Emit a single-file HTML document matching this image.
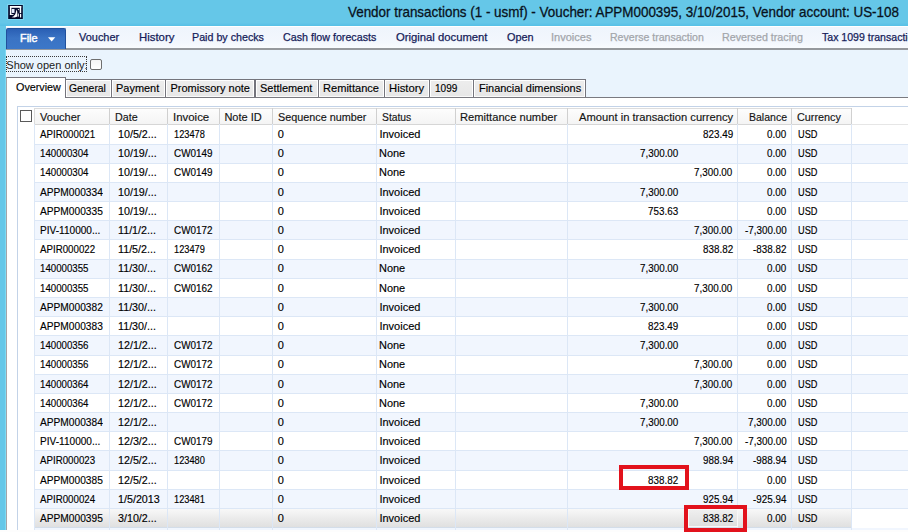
<!DOCTYPE html><html><head><meta charset="utf-8"><style>
*{margin:0;padding:0;box-sizing:border-box}
html,body{width:908px;height:532px;overflow:hidden}
body{position:relative;background:#65c7e8;font-family:"Liberation Sans",sans-serif;font-size:11px;color:#1b1b1b}
.a{position:absolute}
.t{position:absolute;white-space:nowrap;line-height:20px;height:20px}
</style></head><body>
<svg class="a" style="left:7.2px;top:4.05px" width="17" height="16" viewBox="-1 -1 16.6 16">
<rect x="-1" y="-1" width="16.6" height="16" fill="#7fd6ef"/>
<rect x="0" y="0" width="14.6" height="14" fill="#03072a"/>
<g fill="#fff">
<rect x="1.7" y="1" width="11.3" height="1.8"/>
<rect x="1.7" y="1" width="1.5" height="8.8"/>
<rect x="11.5" y="1" width="1.5" height="7"/>
<rect x="11.8" y="8.85" width="1.2" height="3.6"/>
<rect x="3.6" y="3.95" width="2.7" height="4" fill="#e8eeff"/>
<rect x="1.7" y="9.1" width="3.6" height="0.9"/>
<path d="M3.3 12.25L5.5 11.2L7.2 9L8.4 4.6L9 6.5L9.3 11.5L6.5 12.6Z"/>
<circle cx="10.2" cy="4.55" r="0.65"/>
<rect x="9.9" y="8.55" width="0.8" height="3.1"/>
</g>
</svg>
<div class="t" style="left:348.11px;top:2.40px;font-size:15px;color:#08121c;transform:scaleX(0.8941);transform-origin:0 0;-webkit-text-stroke:0.15px currentColor;-webkit-text-stroke:0.3px currentColor;">Vendor transactions (1 - usmf) - Voucher: APPM000395, 3/10/2015, Vendor account: US-108</div>
<div class="a" style="left:0;top:22.5px;width:908px;height:3.5px;background:linear-gradient(#63c6e8,#57c0e6)"></div>
<div class="a" style="left:6px;top:26px;width:902px;height:23px;background:linear-gradient(#eff5fc,#f3f7fd 70%,#fafcfe);border-top:1px solid #ffffff"></div>
<div class="a" style="left:6px;top:48.4px;width:902px;height:1.6px;background:#95989c"></div>
<div class="a" style="left:6px;top:27.6px;width:60px;height:21px;background:linear-gradient(#2a5fb4,#3a73c4 45%,#3c77c8);border:1px solid #21509c;border-bottom:none;border-radius:2px 2px 0 0"></div>
<div class="t" style="left:19.71px;top:27.60px;font-size:11px;color:#ffffff;transform:scaleX(0.9908);transform-origin:0 0;-webkit-text-stroke:0.15px currentColor;-webkit-text-stroke:0.45px #fff;">File</div>
<svg class="a" style="left:48px;top:36.7px" width="8" height="5"><path d="M0 0.2h7.3L3.65 4.4z" fill="#fff"/></svg>
<div class="t" style="left:79.35px;top:26.80px;font-size:11px;color:#161d5a;transform:scaleX(0.9963);transform-origin:0 0;-webkit-text-stroke:0.15px currentColor;-webkit-text-stroke:0.25px currentColor;">Voucher</div>
<div class="t" style="left:138.57px;top:26.80px;font-size:11px;color:#161d5a;transform:scaleX(1.0330);transform-origin:0 0;-webkit-text-stroke:0.15px currentColor;-webkit-text-stroke:0.25px currentColor;">History</div>
<div class="t" style="left:192.42px;top:26.80px;font-size:11px;color:#161d5a;transform:scaleX(0.9725);transform-origin:0 0;-webkit-text-stroke:0.15px currentColor;-webkit-text-stroke:0.25px currentColor;">Paid by checks</div>
<div class="t" style="left:282.97px;top:26.80px;font-size:11px;color:#161d5a;transform:scaleX(0.9721);transform-origin:0 0;-webkit-text-stroke:0.15px currentColor;-webkit-text-stroke:0.25px currentColor;">Cash flow forecasts</div>
<div class="t" style="left:395.79px;top:26.80px;font-size:11px;color:#161d5a;transform:scaleX(1.0248);transform-origin:0 0;-webkit-text-stroke:0.15px currentColor;-webkit-text-stroke:0.25px currentColor;">Original document</div>
<div class="t" style="left:506.81px;top:26.80px;font-size:11px;color:#161d5a;transform:scaleX(0.9883);transform-origin:0 0;-webkit-text-stroke:0.15px currentColor;-webkit-text-stroke:0.25px currentColor;">Open</div>
<div class="t" style="left:551.40px;top:26.80px;font-size:11px;color:#a3a6ab;transform:scaleX(1.0039);transform-origin:0 0;-webkit-text-stroke:0.15px currentColor;-webkit-text-stroke:0.25px currentColor;">Invoices</div>
<div class="t" style="left:610.34px;top:26.80px;font-size:11px;color:#a3a6ab;transform:scaleX(0.9595);transform-origin:0 0;-webkit-text-stroke:0.15px currentColor;-webkit-text-stroke:0.25px currentColor;">Reverse transaction</div>
<div class="t" style="left:722.22px;top:26.80px;font-size:11px;color:#a3a6ab;transform:scaleX(0.9736);transform-origin:0 0;-webkit-text-stroke:0.15px currentColor;-webkit-text-stroke:0.25px currentColor;">Reversed tracing</div>
<div class="t" style="left:821.96px;top:26.80px;font-size:11px;color:#161d5a;transform:scaleX(0.9600);transform-origin:0 0;-webkit-text-stroke:0.15px currentColor;-webkit-text-stroke:0.25px currentColor;">Tax 1099 transactions</div>
<div class="a" style="left:6px;top:50px;width:902px;height:482px;background:#eaf4fd"></div>
<div class="a" style="left:6.3px;top:56.3px;width:81.2px;height:16px;border:1px dotted #3a3a3a"></div>
<div class="t" style="left:6.30px;top:54.60px;font-size:11px;color:#1a1a1a;-webkit-text-stroke:0.15px currentColor;-webkit-text-stroke:0;">Show open only:</div>
<div class="a" style="left:90.4px;top:58.5px;width:11.9px;height:11.9px;border:1.2px solid #6e6e6e;border-radius:2px;background:linear-gradient(#f4f4f4,#fff)"></div>
<div class="a" style="left:6px;top:96.5px;width:902px;height:440px;background:#fff;border-left:1px solid #a4a4a8;border-top:1px solid #7a7a80"></div>
<div class="a" style="left:65.1px;top:78.5px;width:46.7px;height:18.5px;background:linear-gradient(#ededed,#e7e7e7);border:1px solid #74747c;border-bottom:none;box-shadow:inset 1px 1px 0 #fff,inset -1px 0 0 #fff,inset 0 -1px 0 #fafafa"></div>
<div class="t" style="left:69.48px;top:77.60px;font-size:11px;color:#000000;transform:scaleX(0.9432);transform-origin:0 0;-webkit-text-stroke:0.15px currentColor;">General</div>
<div class="a" style="left:110.8px;top:78.5px;width:55.10000000000001px;height:18.5px;background:linear-gradient(#ededed,#e7e7e7);border:1px solid #74747c;border-bottom:none;box-shadow:inset 1px 1px 0 #fff,inset -1px 0 0 #fff,inset 0 -1px 0 #fafafa"></div>
<div class="t" style="left:116.30px;top:77.60px;font-size:11px;color:#000000;transform:scaleX(0.9965);transform-origin:0 0;-webkit-text-stroke:0.15px currentColor;">Payment</div>
<div class="a" style="left:164.9px;top:78.5px;width:90.6px;height:18.5px;background:linear-gradient(#ededed,#e7e7e7);border:1px solid #74747c;border-bottom:none;box-shadow:inset 1px 1px 0 #fff,inset -1px 0 0 #fff,inset 0 -1px 0 #fafafa"></div>
<div class="t" style="left:170.50px;top:77.60px;font-size:11px;color:#000000;-webkit-text-stroke:0.15px currentColor;">Promissory note</div>
<div class="a" style="left:254.5px;top:78.5px;width:64.19999999999999px;height:18.5px;background:linear-gradient(#ededed,#e7e7e7);border:1px solid #74747c;border-bottom:none;box-shadow:inset 1px 1px 0 #fff,inset -1px 0 0 #fff,inset 0 -1px 0 #fafafa"></div>
<div class="t" style="left:260.00px;top:77.60px;font-size:11px;color:#000000;transform:scaleX(0.9952);transform-origin:0 0;-webkit-text-stroke:0.15px currentColor;">Settlement</div>
<div class="a" style="left:317.7px;top:78.5px;width:67.30000000000001px;height:18.5px;background:linear-gradient(#ededed,#e7e7e7);border:1px solid #74747c;border-bottom:none;box-shadow:inset 1px 1px 0 #fff,inset -1px 0 0 #fff,inset 0 -1px 0 #fafafa"></div>
<div class="t" style="left:323.09px;top:77.60px;font-size:11px;color:#000000;transform:scaleX(1.0065);transform-origin:0 0;-webkit-text-stroke:0.15px currentColor;">Remittance</div>
<div class="a" style="left:384.0px;top:78.5px;width:46.30000000000001px;height:18.5px;background:linear-gradient(#ededed,#e7e7e7);border:1px solid #74747c;border-bottom:none;box-shadow:inset 1px 1px 0 #fff,inset -1px 0 0 #fff,inset 0 -1px 0 #fafafa"></div>
<div class="t" style="left:388.88px;top:77.60px;font-size:11px;color:#000000;transform:scaleX(1.0270);transform-origin:0 0;-webkit-text-stroke:0.15px currentColor;">History</div>
<div class="a" style="left:429.3px;top:78.5px;width:44.80000000000001px;height:18.5px;background:linear-gradient(#ededed,#e7e7e7);border:1px solid #74747c;border-bottom:none;box-shadow:inset 1px 1px 0 #fff,inset -1px 0 0 #fff,inset 0 -1px 0 #fafafa"></div>
<div class="t" style="left:435.12px;top:77.60px;font-size:11px;color:#000000;transform:scaleX(0.9134);transform-origin:0 0;-webkit-text-stroke:0.15px currentColor;">1099</div>
<div class="a" style="left:473.1px;top:78.5px;width:113.0px;height:18.5px;background:linear-gradient(#ededed,#e7e7e7);border:1px solid #74747c;border-bottom:none;box-shadow:inset 1px 1px 0 #fff,inset -1px 0 0 #fff,inset 0 -1px 0 #fafafa"></div>
<div class="t" style="left:478.81px;top:77.60px;font-size:11px;color:#000000;transform:scaleX(0.9941);transform-origin:0 0;-webkit-text-stroke:0.15px currentColor;">Financial dimensions</div>
<div class="a" style="left:6px;top:77px;width:60.099999999999994px;height:21px;background:#fff;border:1px solid #74747c;border-left-color:#a4a4a8;border-bottom:none"></div>
<div class="t" style="left:15.71px;top:77.10px;font-size:11px;color:#000000;transform:scaleX(0.9791);transform-origin:0 0;-webkit-text-stroke:0.15px currentColor;">Overview</div>
<div class="a" style="left:17px;top:106px;width:900px;height:440px;border:1px solid #c3d3e8;background:#fff"></div>
<div class="a" style="left:34px;top:123.8px;width:874px;height:1px;background:#e6e6e6"></div>
<div class="a" style="left:34px;top:108.1px;width:817.5px;height:16.7px;background:linear-gradient(#fdfdfd,#f4f4f4);border-top:1px solid #dcdcdc;border-left:1px solid #dcdcdc;border-bottom:1px solid #d6d6d6"></div>
<div class="a" style="left:20px;top:110.4px;width:12px;height:12px;border:1px solid #5a5a5a;background:#fff"></div>
<div class="a" style="left:109.0px;top:108.1px;width:1px;height:16.7px;background:#d0d0d0"></div>
<div class="a" style="left:167.1px;top:108.1px;width:1px;height:16.7px;background:#d0d0d0"></div>
<div class="a" style="left:218.5px;top:108.1px;width:1px;height:16.7px;background:#d0d0d0"></div>
<div class="a" style="left:271.8px;top:108.1px;width:1px;height:16.7px;background:#d0d0d0"></div>
<div class="a" style="left:376.1px;top:108.1px;width:1px;height:16.7px;background:#d0d0d0"></div>
<div class="a" style="left:454.6px;top:108.1px;width:1px;height:16.7px;background:#d0d0d0"></div>
<div class="a" style="left:567.1px;top:108.1px;width:1px;height:16.7px;background:#d0d0d0"></div>
<div class="a" style="left:737.3px;top:108.1px;width:1px;height:16.7px;background:#d0d0d0"></div>
<div class="a" style="left:791.0px;top:108.1px;width:1px;height:16.7px;background:#d0d0d0"></div>
<div class="a" style="left:851.0px;top:108.1px;width:1px;height:16.7px;background:#d0d0d0"></div>
<div class="t" style="left:40.25px;top:106.50px;font-size:11px;color:#141414;transform:scaleX(1.0037);transform-origin:0 0;-webkit-text-stroke:0.15px currentColor;">Voucher</div>
<div class="t" style="left:114.82px;top:106.50px;font-size:11px;color:#141414;transform:scaleX(0.9748);transform-origin:0 0;-webkit-text-stroke:0.15px currentColor;">Date</div>
<div class="t" style="left:172.96px;top:106.50px;font-size:11px;color:#141414;transform:scaleX(1.0389);transform-origin:0 0;-webkit-text-stroke:0.15px currentColor;">Invoice</div>
<div class="t" style="left:224.40px;top:106.50px;font-size:11px;color:#141414;-webkit-text-stroke:0.15px currentColor;">Note ID</div>
<div class="t" style="left:277.61px;top:106.50px;font-size:11px;color:#141414;transform:scaleX(0.9826);transform-origin:0 0;-webkit-text-stroke:0.15px currentColor;">Sequence number</div>
<div class="t" style="left:382.13px;top:106.50px;font-size:11px;color:#141414;transform:scaleX(0.9373);transform-origin:0 0;-webkit-text-stroke:0.15px currentColor;">Status</div>
<div class="t" style="left:460.29px;top:106.50px;font-size:11px;color:#141414;transform:scaleX(1.0132);transform-origin:0 0;-webkit-text-stroke:0.15px currentColor;">Remittance number</div>
<div class="t" style="left:578.85px;top:106.50px;font-size:11px;color:#141414;transform:scaleX(1.0168);transform-origin:0 0;-webkit-text-stroke:0.15px currentColor;">Amount in transaction currency</div>
<div class="t" style="left:748.64px;top:106.50px;font-size:11px;color:#141414;transform:scaleX(0.9557);transform-origin:0 0;-webkit-text-stroke:0.15px currentColor;">Balance</div>
<div class="t" style="left:797.16px;top:106.50px;font-size:11px;color:#141414;transform:scaleX(0.9841);transform-origin:0 0;-webkit-text-stroke:0.15px currentColor;">Currency</div>
<div class="a" style="left:34px;top:124.85px;width:874px;height:19.18px;background:#ffffff"></div>
<div class="a" style="left:34px;top:144.03px;width:874px;height:19.18px;background:#f1f6fe"></div>
<div class="a" style="left:34px;top:163.20999999999998px;width:874px;height:19.18px;background:#ffffff"></div>
<div class="a" style="left:34px;top:182.39px;width:874px;height:19.18px;background:#f1f6fe"></div>
<div class="a" style="left:34px;top:201.57px;width:874px;height:19.18px;background:#ffffff"></div>
<div class="a" style="left:34px;top:220.75px;width:874px;height:19.18px;background:#f1f6fe"></div>
<div class="a" style="left:34px;top:239.93px;width:874px;height:19.18px;background:#ffffff"></div>
<div class="a" style="left:34px;top:259.11px;width:874px;height:19.18px;background:#f1f6fe"></div>
<div class="a" style="left:34px;top:278.28999999999996px;width:874px;height:19.18px;background:#ffffff"></div>
<div class="a" style="left:34px;top:297.47px;width:874px;height:19.18px;background:#f1f6fe"></div>
<div class="a" style="left:34px;top:316.65px;width:874px;height:19.18px;background:#ffffff"></div>
<div class="a" style="left:34px;top:335.83px;width:874px;height:19.18px;background:#f1f6fe"></div>
<div class="a" style="left:34px;top:355.01px;width:874px;height:19.18px;background:#ffffff"></div>
<div class="a" style="left:34px;top:374.19px;width:874px;height:19.18px;background:#f1f6fe"></div>
<div class="a" style="left:34px;top:393.37px;width:874px;height:19.18px;background:#ffffff"></div>
<div class="a" style="left:34px;top:412.54999999999995px;width:874px;height:19.18px;background:#f1f6fe"></div>
<div class="a" style="left:34px;top:431.73px;width:874px;height:19.18px;background:#ffffff"></div>
<div class="a" style="left:34px;top:450.90999999999997px;width:874px;height:19.18px;background:#f1f6fe"></div>
<div class="a" style="left:34px;top:470.09000000000003px;width:874px;height:19.18px;background:#ffffff"></div>
<div class="a" style="left:34px;top:489.27px;width:874px;height:19.18px;background:#f1f6fe"></div>
<div class="a" style="left:34px;top:507.95000000000005px;width:817.5px;height:19.68px;background:linear-gradient(#f8f8f8,#e9e9e9 60%,#e0e0e0);border-top:1px solid #d9e3f0;border-bottom:1px solid #d3dde9"></div>
<div class="a" style="left:851.5px;top:507.95000000000005px;width:56.5px;height:19.68px;background:#fff"></div>
<div class="a" style="left:34px;top:527.63px;width:874px;height:10px;background:#f1f6fe"></div>
<div class="a" style="left:34px;top:143.53px;width:874px;height:1px;background:#dce7f6"></div>
<div class="a" style="left:34px;top:162.70999999999998px;width:874px;height:1px;background:#dce7f6"></div>
<div class="a" style="left:34px;top:181.89px;width:874px;height:1px;background:#dce7f6"></div>
<div class="a" style="left:34px;top:201.07px;width:874px;height:1px;background:#dce7f6"></div>
<div class="a" style="left:34px;top:220.25px;width:874px;height:1px;background:#dce7f6"></div>
<div class="a" style="left:34px;top:239.43px;width:874px;height:1px;background:#dce7f6"></div>
<div class="a" style="left:34px;top:258.61px;width:874px;height:1px;background:#dce7f6"></div>
<div class="a" style="left:34px;top:277.78999999999996px;width:874px;height:1px;background:#dce7f6"></div>
<div class="a" style="left:34px;top:296.97px;width:874px;height:1px;background:#dce7f6"></div>
<div class="a" style="left:34px;top:316.15px;width:874px;height:1px;background:#dce7f6"></div>
<div class="a" style="left:34px;top:335.33px;width:874px;height:1px;background:#dce7f6"></div>
<div class="a" style="left:34px;top:354.51px;width:874px;height:1px;background:#dce7f6"></div>
<div class="a" style="left:34px;top:373.69px;width:874px;height:1px;background:#dce7f6"></div>
<div class="a" style="left:34px;top:392.87px;width:874px;height:1px;background:#dce7f6"></div>
<div class="a" style="left:34px;top:412.04999999999995px;width:874px;height:1px;background:#dce7f6"></div>
<div class="a" style="left:34px;top:431.23px;width:874px;height:1px;background:#dce7f6"></div>
<div class="a" style="left:34px;top:450.40999999999997px;width:874px;height:1px;background:#dce7f6"></div>
<div class="a" style="left:34px;top:469.59000000000003px;width:874px;height:1px;background:#dce7f6"></div>
<div class="a" style="left:34px;top:488.77px;width:874px;height:1px;background:#dce7f6"></div>
<div class="a" style="left:34px;top:507.95000000000005px;width:874px;height:1px;background:#dce7f6"></div>
<div class="a" style="left:33.7px;top:124.3px;width:1px;height:410px;background:#dce7f6"></div>
<div class="a" style="left:109.0px;top:124.3px;width:1px;height:410px;background:#dce7f6"></div>
<div class="a" style="left:167.1px;top:124.3px;width:1px;height:410px;background:#dce7f6"></div>
<div class="a" style="left:218.5px;top:124.3px;width:1px;height:410px;background:#dce7f6"></div>
<div class="a" style="left:271.8px;top:124.3px;width:1px;height:410px;background:#dce7f6"></div>
<div class="a" style="left:376.1px;top:124.3px;width:1px;height:410px;background:#dce7f6"></div>
<div class="a" style="left:454.6px;top:124.3px;width:1px;height:410px;background:#dce7f6"></div>
<div class="a" style="left:567.1px;top:124.3px;width:1px;height:410px;background:#dce7f6"></div>
<div class="a" style="left:737.3px;top:124.3px;width:1px;height:410px;background:#dce7f6"></div>
<div class="a" style="left:791.0px;top:124.3px;width:1px;height:410px;background:#dce7f6"></div>
<div class="a" style="left:851.0px;top:124.3px;width:1px;height:410px;background:#dce7f6"></div>
<div class="a" style="left:688px;top:509.45000000000005px;width:50px;height:17.18px;background:linear-gradient(#efefef,#dedede);border:1px solid #f8f8f8"></div>
<div class="t" style="left:40.00px;top:123.90px;font-size:11px;color:#000000;transform:scaleX(0.8830);transform-origin:0 0;-webkit-text-stroke:0.15px currentColor;">APIR000021</div>
<div class="t" style="left:117.60px;top:123.90px;font-size:11px;color:#000000;transform:scaleX(0.9750);transform-origin:0 0;-webkit-text-stroke:0.15px currentColor;">10/5/2...</div>
<div class="t" style="left:173.50px;top:123.90px;font-size:11px;color:#000000;transform:scaleX(0.8420);transform-origin:0 0;-webkit-text-stroke:0.15px currentColor;">123478</div>
<div class="t" style="left:277.75px;top:123.90px;font-size:11px;color:#000000;-webkit-text-stroke:0.15px currentColor;">0</div>
<div class="t" style="left:379.40px;top:123.90px;font-size:11px;color:#000000;-webkit-text-stroke:0.15px currentColor;">Invoiced</div>
<div class="t" style="left:702.73px;top:123.90px;font-size:11px;color:#000000;transform:scaleX(0.8950);transform-origin:0 0;-webkit-text-stroke:0.15px currentColor;">823.49</div>
<div class="t" style="left:767.41px;top:123.90px;font-size:11px;color:#000000;transform:scaleX(0.8950);transform-origin:0 0;-webkit-text-stroke:0.15px currentColor;">0.00</div>
<div class="t" style="left:797.50px;top:123.90px;font-size:11px;color:#000000;transform:scaleX(0.8360);transform-origin:0 0;-webkit-text-stroke:0.15px currentColor;">USD</div>
<div class="t" style="left:40.00px;top:143.10px;font-size:11px;color:#000000;transform:scaleX(0.8810);transform-origin:0 0;-webkit-text-stroke:0.15px currentColor;">140000304</div>
<div class="t" style="left:117.60px;top:143.10px;font-size:11px;color:#000000;transform:scaleX(0.9750);transform-origin:0 0;-webkit-text-stroke:0.15px currentColor;">10/19/...</div>
<div class="t" style="left:173.50px;top:143.10px;font-size:11px;color:#000000;transform:scaleX(0.9000);transform-origin:0 0;-webkit-text-stroke:0.15px currentColor;">CW0149</div>
<div class="t" style="left:277.75px;top:143.10px;font-size:11px;color:#000000;-webkit-text-stroke:0.15px currentColor;">0</div>
<div class="t" style="left:379.40px;top:143.10px;font-size:11px;color:#000000;transform:scaleX(0.9960);transform-origin:0 0;-webkit-text-stroke:0.15px currentColor;">None</div>
<div class="t" style="left:639.55px;top:143.10px;font-size:11px;color:#000000;transform:scaleX(0.8950);transform-origin:0 0;-webkit-text-stroke:0.15px currentColor;">7,300.00</div>
<div class="t" style="left:767.41px;top:143.10px;font-size:11px;color:#000000;transform:scaleX(0.8950);transform-origin:0 0;-webkit-text-stroke:0.15px currentColor;">0.00</div>
<div class="t" style="left:797.50px;top:143.10px;font-size:11px;color:#000000;transform:scaleX(0.8360);transform-origin:0 0;-webkit-text-stroke:0.15px currentColor;">USD</div>
<div class="t" style="left:40.00px;top:162.30px;font-size:11px;color:#000000;transform:scaleX(0.8810);transform-origin:0 0;-webkit-text-stroke:0.15px currentColor;">140000304</div>
<div class="t" style="left:117.60px;top:162.30px;font-size:11px;color:#000000;transform:scaleX(0.9750);transform-origin:0 0;-webkit-text-stroke:0.15px currentColor;">10/19/...</div>
<div class="t" style="left:173.50px;top:162.30px;font-size:11px;color:#000000;transform:scaleX(0.9000);transform-origin:0 0;-webkit-text-stroke:0.15px currentColor;">CW0149</div>
<div class="t" style="left:277.75px;top:162.30px;font-size:11px;color:#000000;-webkit-text-stroke:0.15px currentColor;">0</div>
<div class="t" style="left:379.40px;top:162.30px;font-size:11px;color:#000000;transform:scaleX(0.9960);transform-origin:0 0;-webkit-text-stroke:0.15px currentColor;">None</div>
<div class="t" style="left:694.45px;top:162.30px;font-size:11px;color:#000000;transform:scaleX(0.8950);transform-origin:0 0;-webkit-text-stroke:0.15px currentColor;">7,300.00</div>
<div class="t" style="left:767.41px;top:162.30px;font-size:11px;color:#000000;transform:scaleX(0.8950);transform-origin:0 0;-webkit-text-stroke:0.15px currentColor;">0.00</div>
<div class="t" style="left:797.50px;top:162.30px;font-size:11px;color:#000000;transform:scaleX(0.8360);transform-origin:0 0;-webkit-text-stroke:0.15px currentColor;">USD</div>
<div class="t" style="left:40.00px;top:181.50px;font-size:11px;color:#000000;transform:scaleX(0.9250);transform-origin:0 0;-webkit-text-stroke:0.15px currentColor;">APPM000334</div>
<div class="t" style="left:117.60px;top:181.50px;font-size:11px;color:#000000;transform:scaleX(0.9750);transform-origin:0 0;-webkit-text-stroke:0.15px currentColor;">10/19/...</div>
<div class="t" style="left:277.75px;top:181.50px;font-size:11px;color:#000000;-webkit-text-stroke:0.15px currentColor;">0</div>
<div class="t" style="left:379.40px;top:181.50px;font-size:11px;color:#000000;-webkit-text-stroke:0.15px currentColor;">Invoiced</div>
<div class="t" style="left:639.55px;top:181.50px;font-size:11px;color:#000000;transform:scaleX(0.8950);transform-origin:0 0;-webkit-text-stroke:0.15px currentColor;">7,300.00</div>
<div class="t" style="left:767.41px;top:181.50px;font-size:11px;color:#000000;transform:scaleX(0.8950);transform-origin:0 0;-webkit-text-stroke:0.15px currentColor;">0.00</div>
<div class="t" style="left:797.50px;top:181.50px;font-size:11px;color:#000000;transform:scaleX(0.8360);transform-origin:0 0;-webkit-text-stroke:0.15px currentColor;">USD</div>
<div class="t" style="left:40.00px;top:200.70px;font-size:11px;color:#000000;transform:scaleX(0.9250);transform-origin:0 0;-webkit-text-stroke:0.15px currentColor;">APPM000335</div>
<div class="t" style="left:117.60px;top:200.70px;font-size:11px;color:#000000;transform:scaleX(0.9750);transform-origin:0 0;-webkit-text-stroke:0.15px currentColor;">10/19/...</div>
<div class="t" style="left:277.75px;top:200.70px;font-size:11px;color:#000000;-webkit-text-stroke:0.15px currentColor;">0</div>
<div class="t" style="left:379.40px;top:200.70px;font-size:11px;color:#000000;-webkit-text-stroke:0.15px currentColor;">Invoiced</div>
<div class="t" style="left:647.79px;top:200.70px;font-size:11px;color:#000000;transform:scaleX(0.8950);transform-origin:0 0;-webkit-text-stroke:0.15px currentColor;">753.63</div>
<div class="t" style="left:767.41px;top:200.70px;font-size:11px;color:#000000;transform:scaleX(0.8950);transform-origin:0 0;-webkit-text-stroke:0.15px currentColor;">0.00</div>
<div class="t" style="left:797.50px;top:200.70px;font-size:11px;color:#000000;transform:scaleX(0.8360);transform-origin:0 0;-webkit-text-stroke:0.15px currentColor;">USD</div>
<div class="t" style="left:40.00px;top:219.90px;font-size:11px;color:#000000;transform:scaleX(0.9170);transform-origin:0 0;-webkit-text-stroke:0.15px currentColor;">PIV-110000...</div>
<div class="t" style="left:117.60px;top:219.90px;font-size:11px;color:#000000;transform:scaleX(0.9750);transform-origin:0 0;-webkit-text-stroke:0.15px currentColor;">11/1/2...</div>
<div class="t" style="left:173.50px;top:219.90px;font-size:11px;color:#000000;transform:scaleX(0.9000);transform-origin:0 0;-webkit-text-stroke:0.15px currentColor;">CW0172</div>
<div class="t" style="left:277.75px;top:219.90px;font-size:11px;color:#000000;-webkit-text-stroke:0.15px currentColor;">0</div>
<div class="t" style="left:379.40px;top:219.90px;font-size:11px;color:#000000;-webkit-text-stroke:0.15px currentColor;">Invoiced</div>
<div class="t" style="left:694.45px;top:219.90px;font-size:11px;color:#000000;transform:scaleX(0.8950);transform-origin:0 0;-webkit-text-stroke:0.15px currentColor;">7,300.00</div>
<div class="t" style="left:744.99px;top:219.90px;font-size:11px;color:#000000;transform:scaleX(0.8950);transform-origin:0 0;-webkit-text-stroke:0.15px currentColor;">-7,300.00</div>
<div class="t" style="left:797.50px;top:219.90px;font-size:11px;color:#000000;transform:scaleX(0.8360);transform-origin:0 0;-webkit-text-stroke:0.15px currentColor;">USD</div>
<div class="t" style="left:40.00px;top:239.10px;font-size:11px;color:#000000;transform:scaleX(0.8830);transform-origin:0 0;-webkit-text-stroke:0.15px currentColor;">APIR000022</div>
<div class="t" style="left:117.60px;top:239.10px;font-size:11px;color:#000000;transform:scaleX(0.9750);transform-origin:0 0;-webkit-text-stroke:0.15px currentColor;">11/5/2...</div>
<div class="t" style="left:173.50px;top:239.10px;font-size:11px;color:#000000;transform:scaleX(0.8420);transform-origin:0 0;-webkit-text-stroke:0.15px currentColor;">123479</div>
<div class="t" style="left:277.75px;top:239.10px;font-size:11px;color:#000000;-webkit-text-stroke:0.15px currentColor;">0</div>
<div class="t" style="left:379.40px;top:239.10px;font-size:11px;color:#000000;-webkit-text-stroke:0.15px currentColor;">Invoiced</div>
<div class="t" style="left:702.78px;top:239.10px;font-size:11px;color:#000000;transform:scaleX(0.8950);transform-origin:0 0;-webkit-text-stroke:0.15px currentColor;">838.82</div>
<div class="t" style="left:753.31px;top:239.10px;font-size:11px;color:#000000;transform:scaleX(0.8950);transform-origin:0 0;-webkit-text-stroke:0.15px currentColor;">-838.82</div>
<div class="t" style="left:797.50px;top:239.10px;font-size:11px;color:#000000;transform:scaleX(0.8360);transform-origin:0 0;-webkit-text-stroke:0.15px currentColor;">USD</div>
<div class="t" style="left:40.00px;top:258.30px;font-size:11px;color:#000000;transform:scaleX(0.8810);transform-origin:0 0;-webkit-text-stroke:0.15px currentColor;">140000355</div>
<div class="t" style="left:117.60px;top:258.30px;font-size:11px;color:#000000;transform:scaleX(0.9750);transform-origin:0 0;-webkit-text-stroke:0.15px currentColor;">11/30/...</div>
<div class="t" style="left:173.50px;top:258.30px;font-size:11px;color:#000000;transform:scaleX(0.9000);transform-origin:0 0;-webkit-text-stroke:0.15px currentColor;">CW0162</div>
<div class="t" style="left:277.75px;top:258.30px;font-size:11px;color:#000000;-webkit-text-stroke:0.15px currentColor;">0</div>
<div class="t" style="left:379.40px;top:258.30px;font-size:11px;color:#000000;transform:scaleX(0.9960);transform-origin:0 0;-webkit-text-stroke:0.15px currentColor;">None</div>
<div class="t" style="left:639.55px;top:258.30px;font-size:11px;color:#000000;transform:scaleX(0.8950);transform-origin:0 0;-webkit-text-stroke:0.15px currentColor;">7,300.00</div>
<div class="t" style="left:767.41px;top:258.30px;font-size:11px;color:#000000;transform:scaleX(0.8950);transform-origin:0 0;-webkit-text-stroke:0.15px currentColor;">0.00</div>
<div class="t" style="left:797.50px;top:258.30px;font-size:11px;color:#000000;transform:scaleX(0.8360);transform-origin:0 0;-webkit-text-stroke:0.15px currentColor;">USD</div>
<div class="t" style="left:40.00px;top:277.50px;font-size:11px;color:#000000;transform:scaleX(0.8810);transform-origin:0 0;-webkit-text-stroke:0.15px currentColor;">140000355</div>
<div class="t" style="left:117.60px;top:277.50px;font-size:11px;color:#000000;transform:scaleX(0.9750);transform-origin:0 0;-webkit-text-stroke:0.15px currentColor;">11/30/...</div>
<div class="t" style="left:173.50px;top:277.50px;font-size:11px;color:#000000;transform:scaleX(0.9000);transform-origin:0 0;-webkit-text-stroke:0.15px currentColor;">CW0162</div>
<div class="t" style="left:277.75px;top:277.50px;font-size:11px;color:#000000;-webkit-text-stroke:0.15px currentColor;">0</div>
<div class="t" style="left:379.40px;top:277.50px;font-size:11px;color:#000000;transform:scaleX(0.9960);transform-origin:0 0;-webkit-text-stroke:0.15px currentColor;">None</div>
<div class="t" style="left:694.45px;top:277.50px;font-size:11px;color:#000000;transform:scaleX(0.8950);transform-origin:0 0;-webkit-text-stroke:0.15px currentColor;">7,300.00</div>
<div class="t" style="left:767.41px;top:277.50px;font-size:11px;color:#000000;transform:scaleX(0.8950);transform-origin:0 0;-webkit-text-stroke:0.15px currentColor;">0.00</div>
<div class="t" style="left:797.50px;top:277.50px;font-size:11px;color:#000000;transform:scaleX(0.8360);transform-origin:0 0;-webkit-text-stroke:0.15px currentColor;">USD</div>
<div class="t" style="left:40.00px;top:296.70px;font-size:11px;color:#000000;transform:scaleX(0.9250);transform-origin:0 0;-webkit-text-stroke:0.15px currentColor;">APPM000382</div>
<div class="t" style="left:117.60px;top:296.70px;font-size:11px;color:#000000;transform:scaleX(0.9750);transform-origin:0 0;-webkit-text-stroke:0.15px currentColor;">11/30/...</div>
<div class="t" style="left:277.75px;top:296.70px;font-size:11px;color:#000000;-webkit-text-stroke:0.15px currentColor;">0</div>
<div class="t" style="left:379.40px;top:296.70px;font-size:11px;color:#000000;-webkit-text-stroke:0.15px currentColor;">Invoiced</div>
<div class="t" style="left:639.55px;top:296.70px;font-size:11px;color:#000000;transform:scaleX(0.8950);transform-origin:0 0;-webkit-text-stroke:0.15px currentColor;">7,300.00</div>
<div class="t" style="left:767.41px;top:296.70px;font-size:11px;color:#000000;transform:scaleX(0.8950);transform-origin:0 0;-webkit-text-stroke:0.15px currentColor;">0.00</div>
<div class="t" style="left:797.50px;top:296.70px;font-size:11px;color:#000000;transform:scaleX(0.8360);transform-origin:0 0;-webkit-text-stroke:0.15px currentColor;">USD</div>
<div class="t" style="left:40.00px;top:315.90px;font-size:11px;color:#000000;transform:scaleX(0.9250);transform-origin:0 0;-webkit-text-stroke:0.15px currentColor;">APPM000383</div>
<div class="t" style="left:117.60px;top:315.90px;font-size:11px;color:#000000;transform:scaleX(0.9750);transform-origin:0 0;-webkit-text-stroke:0.15px currentColor;">11/30/...</div>
<div class="t" style="left:277.75px;top:315.90px;font-size:11px;color:#000000;-webkit-text-stroke:0.15px currentColor;">0</div>
<div class="t" style="left:379.40px;top:315.90px;font-size:11px;color:#000000;-webkit-text-stroke:0.15px currentColor;">Invoiced</div>
<div class="t" style="left:647.83px;top:315.90px;font-size:11px;color:#000000;transform:scaleX(0.8950);transform-origin:0 0;-webkit-text-stroke:0.15px currentColor;">823.49</div>
<div class="t" style="left:767.41px;top:315.90px;font-size:11px;color:#000000;transform:scaleX(0.8950);transform-origin:0 0;-webkit-text-stroke:0.15px currentColor;">0.00</div>
<div class="t" style="left:797.50px;top:315.90px;font-size:11px;color:#000000;transform:scaleX(0.8360);transform-origin:0 0;-webkit-text-stroke:0.15px currentColor;">USD</div>
<div class="t" style="left:40.00px;top:335.10px;font-size:11px;color:#000000;transform:scaleX(0.8810);transform-origin:0 0;-webkit-text-stroke:0.15px currentColor;">140000356</div>
<div class="t" style="left:117.60px;top:335.10px;font-size:11px;color:#000000;transform:scaleX(0.9750);transform-origin:0 0;-webkit-text-stroke:0.15px currentColor;">12/1/2...</div>
<div class="t" style="left:173.50px;top:335.10px;font-size:11px;color:#000000;transform:scaleX(0.9000);transform-origin:0 0;-webkit-text-stroke:0.15px currentColor;">CW0172</div>
<div class="t" style="left:277.75px;top:335.10px;font-size:11px;color:#000000;-webkit-text-stroke:0.15px currentColor;">0</div>
<div class="t" style="left:379.40px;top:335.10px;font-size:11px;color:#000000;transform:scaleX(0.9960);transform-origin:0 0;-webkit-text-stroke:0.15px currentColor;">None</div>
<div class="t" style="left:639.55px;top:335.10px;font-size:11px;color:#000000;transform:scaleX(0.8950);transform-origin:0 0;-webkit-text-stroke:0.15px currentColor;">7,300.00</div>
<div class="t" style="left:767.41px;top:335.10px;font-size:11px;color:#000000;transform:scaleX(0.8950);transform-origin:0 0;-webkit-text-stroke:0.15px currentColor;">0.00</div>
<div class="t" style="left:797.50px;top:335.10px;font-size:11px;color:#000000;transform:scaleX(0.8360);transform-origin:0 0;-webkit-text-stroke:0.15px currentColor;">USD</div>
<div class="t" style="left:40.00px;top:354.30px;font-size:11px;color:#000000;transform:scaleX(0.8810);transform-origin:0 0;-webkit-text-stroke:0.15px currentColor;">140000356</div>
<div class="t" style="left:117.60px;top:354.30px;font-size:11px;color:#000000;transform:scaleX(0.9750);transform-origin:0 0;-webkit-text-stroke:0.15px currentColor;">12/1/2...</div>
<div class="t" style="left:173.50px;top:354.30px;font-size:11px;color:#000000;transform:scaleX(0.9000);transform-origin:0 0;-webkit-text-stroke:0.15px currentColor;">CW0172</div>
<div class="t" style="left:277.75px;top:354.30px;font-size:11px;color:#000000;-webkit-text-stroke:0.15px currentColor;">0</div>
<div class="t" style="left:379.40px;top:354.30px;font-size:11px;color:#000000;transform:scaleX(0.9960);transform-origin:0 0;-webkit-text-stroke:0.15px currentColor;">None</div>
<div class="t" style="left:694.45px;top:354.30px;font-size:11px;color:#000000;transform:scaleX(0.8950);transform-origin:0 0;-webkit-text-stroke:0.15px currentColor;">7,300.00</div>
<div class="t" style="left:767.41px;top:354.30px;font-size:11px;color:#000000;transform:scaleX(0.8950);transform-origin:0 0;-webkit-text-stroke:0.15px currentColor;">0.00</div>
<div class="t" style="left:797.50px;top:354.30px;font-size:11px;color:#000000;transform:scaleX(0.8360);transform-origin:0 0;-webkit-text-stroke:0.15px currentColor;">USD</div>
<div class="t" style="left:40.00px;top:373.50px;font-size:11px;color:#000000;transform:scaleX(0.8810);transform-origin:0 0;-webkit-text-stroke:0.15px currentColor;">140000364</div>
<div class="t" style="left:117.60px;top:373.50px;font-size:11px;color:#000000;transform:scaleX(0.9750);transform-origin:0 0;-webkit-text-stroke:0.15px currentColor;">12/1/2...</div>
<div class="t" style="left:173.50px;top:373.50px;font-size:11px;color:#000000;transform:scaleX(0.9000);transform-origin:0 0;-webkit-text-stroke:0.15px currentColor;">CW0172</div>
<div class="t" style="left:277.75px;top:373.50px;font-size:11px;color:#000000;-webkit-text-stroke:0.15px currentColor;">0</div>
<div class="t" style="left:379.40px;top:373.50px;font-size:11px;color:#000000;transform:scaleX(0.9960);transform-origin:0 0;-webkit-text-stroke:0.15px currentColor;">None</div>
<div class="t" style="left:694.45px;top:373.50px;font-size:11px;color:#000000;transform:scaleX(0.8950);transform-origin:0 0;-webkit-text-stroke:0.15px currentColor;">7,300.00</div>
<div class="t" style="left:767.41px;top:373.50px;font-size:11px;color:#000000;transform:scaleX(0.8950);transform-origin:0 0;-webkit-text-stroke:0.15px currentColor;">0.00</div>
<div class="t" style="left:797.50px;top:373.50px;font-size:11px;color:#000000;transform:scaleX(0.8360);transform-origin:0 0;-webkit-text-stroke:0.15px currentColor;">USD</div>
<div class="t" style="left:40.00px;top:392.70px;font-size:11px;color:#000000;transform:scaleX(0.8810);transform-origin:0 0;-webkit-text-stroke:0.15px currentColor;">140000364</div>
<div class="t" style="left:117.60px;top:392.70px;font-size:11px;color:#000000;transform:scaleX(0.9750);transform-origin:0 0;-webkit-text-stroke:0.15px currentColor;">12/1/2...</div>
<div class="t" style="left:173.50px;top:392.70px;font-size:11px;color:#000000;transform:scaleX(0.9000);transform-origin:0 0;-webkit-text-stroke:0.15px currentColor;">CW0172</div>
<div class="t" style="left:277.75px;top:392.70px;font-size:11px;color:#000000;-webkit-text-stroke:0.15px currentColor;">0</div>
<div class="t" style="left:379.40px;top:392.70px;font-size:11px;color:#000000;transform:scaleX(0.9960);transform-origin:0 0;-webkit-text-stroke:0.15px currentColor;">None</div>
<div class="t" style="left:639.55px;top:392.70px;font-size:11px;color:#000000;transform:scaleX(0.8950);transform-origin:0 0;-webkit-text-stroke:0.15px currentColor;">7,300.00</div>
<div class="t" style="left:767.41px;top:392.70px;font-size:11px;color:#000000;transform:scaleX(0.8950);transform-origin:0 0;-webkit-text-stroke:0.15px currentColor;">0.00</div>
<div class="t" style="left:797.50px;top:392.70px;font-size:11px;color:#000000;transform:scaleX(0.8360);transform-origin:0 0;-webkit-text-stroke:0.15px currentColor;">USD</div>
<div class="t" style="left:40.00px;top:411.90px;font-size:11px;color:#000000;transform:scaleX(0.9250);transform-origin:0 0;-webkit-text-stroke:0.15px currentColor;">APPM000384</div>
<div class="t" style="left:117.60px;top:411.90px;font-size:11px;color:#000000;transform:scaleX(0.9750);transform-origin:0 0;-webkit-text-stroke:0.15px currentColor;">12/1/2...</div>
<div class="t" style="left:277.75px;top:411.90px;font-size:11px;color:#000000;-webkit-text-stroke:0.15px currentColor;">0</div>
<div class="t" style="left:379.40px;top:411.90px;font-size:11px;color:#000000;-webkit-text-stroke:0.15px currentColor;">Invoiced</div>
<div class="t" style="left:639.55px;top:411.90px;font-size:11px;color:#000000;transform:scaleX(0.8950);transform-origin:0 0;-webkit-text-stroke:0.15px currentColor;">7,300.00</div>
<div class="t" style="left:748.25px;top:411.90px;font-size:11px;color:#000000;transform:scaleX(0.8950);transform-origin:0 0;-webkit-text-stroke:0.15px currentColor;">7,300.00</div>
<div class="t" style="left:797.50px;top:411.90px;font-size:11px;color:#000000;transform:scaleX(0.8360);transform-origin:0 0;-webkit-text-stroke:0.15px currentColor;">USD</div>
<div class="t" style="left:40.00px;top:431.10px;font-size:11px;color:#000000;transform:scaleX(0.9170);transform-origin:0 0;-webkit-text-stroke:0.15px currentColor;">PIV-110000...</div>
<div class="t" style="left:117.60px;top:431.10px;font-size:11px;color:#000000;transform:scaleX(0.9750);transform-origin:0 0;-webkit-text-stroke:0.15px currentColor;">12/3/2...</div>
<div class="t" style="left:173.50px;top:431.10px;font-size:11px;color:#000000;transform:scaleX(0.9000);transform-origin:0 0;-webkit-text-stroke:0.15px currentColor;">CW0179</div>
<div class="t" style="left:277.75px;top:431.10px;font-size:11px;color:#000000;-webkit-text-stroke:0.15px currentColor;">0</div>
<div class="t" style="left:379.40px;top:431.10px;font-size:11px;color:#000000;-webkit-text-stroke:0.15px currentColor;">Invoiced</div>
<div class="t" style="left:694.45px;top:431.10px;font-size:11px;color:#000000;transform:scaleX(0.8950);transform-origin:0 0;-webkit-text-stroke:0.15px currentColor;">7,300.00</div>
<div class="t" style="left:744.99px;top:431.10px;font-size:11px;color:#000000;transform:scaleX(0.8950);transform-origin:0 0;-webkit-text-stroke:0.15px currentColor;">-7,300.00</div>
<div class="t" style="left:797.50px;top:431.10px;font-size:11px;color:#000000;transform:scaleX(0.8360);transform-origin:0 0;-webkit-text-stroke:0.15px currentColor;">USD</div>
<div class="t" style="left:40.00px;top:450.30px;font-size:11px;color:#000000;transform:scaleX(0.8830);transform-origin:0 0;-webkit-text-stroke:0.15px currentColor;">APIR000023</div>
<div class="t" style="left:117.60px;top:450.30px;font-size:11px;color:#000000;transform:scaleX(0.9750);transform-origin:0 0;-webkit-text-stroke:0.15px currentColor;">12/5/2...</div>
<div class="t" style="left:173.50px;top:450.30px;font-size:11px;color:#000000;transform:scaleX(0.8420);transform-origin:0 0;-webkit-text-stroke:0.15px currentColor;">123480</div>
<div class="t" style="left:277.75px;top:450.30px;font-size:11px;color:#000000;-webkit-text-stroke:0.15px currentColor;">0</div>
<div class="t" style="left:379.40px;top:450.30px;font-size:11px;color:#000000;-webkit-text-stroke:0.15px currentColor;">Invoiced</div>
<div class="t" style="left:702.55px;top:450.30px;font-size:11px;color:#000000;transform:scaleX(0.8950);transform-origin:0 0;-webkit-text-stroke:0.15px currentColor;">988.94</div>
<div class="t" style="left:753.09px;top:450.30px;font-size:11px;color:#000000;transform:scaleX(0.8950);transform-origin:0 0;-webkit-text-stroke:0.15px currentColor;">-988.94</div>
<div class="t" style="left:797.50px;top:450.30px;font-size:11px;color:#000000;transform:scaleX(0.8360);transform-origin:0 0;-webkit-text-stroke:0.15px currentColor;">USD</div>
<div class="t" style="left:40.00px;top:469.50px;font-size:11px;color:#000000;transform:scaleX(0.9250);transform-origin:0 0;-webkit-text-stroke:0.15px currentColor;">APPM000385</div>
<div class="t" style="left:117.60px;top:469.50px;font-size:11px;color:#000000;transform:scaleX(0.9750);transform-origin:0 0;-webkit-text-stroke:0.15px currentColor;">12/5/2...</div>
<div class="t" style="left:277.75px;top:469.50px;font-size:11px;color:#000000;-webkit-text-stroke:0.15px currentColor;">0</div>
<div class="t" style="left:379.40px;top:469.50px;font-size:11px;color:#000000;-webkit-text-stroke:0.15px currentColor;">Invoiced</div>
<div class="t" style="left:647.88px;top:469.50px;font-size:11px;color:#000000;transform:scaleX(0.8950);transform-origin:0 0;-webkit-text-stroke:0.15px currentColor;">838.82</div>
<div class="t" style="left:767.41px;top:469.50px;font-size:11px;color:#000000;transform:scaleX(0.8950);transform-origin:0 0;-webkit-text-stroke:0.15px currentColor;">0.00</div>
<div class="t" style="left:797.50px;top:469.50px;font-size:11px;color:#000000;transform:scaleX(0.8360);transform-origin:0 0;-webkit-text-stroke:0.15px currentColor;">USD</div>
<div class="t" style="left:40.00px;top:488.70px;font-size:11px;color:#000000;transform:scaleX(0.8830);transform-origin:0 0;-webkit-text-stroke:0.15px currentColor;">APIR000024</div>
<div class="t" style="left:117.60px;top:488.70px;font-size:11px;color:#000000;transform:scaleX(0.9750);transform-origin:0 0;-webkit-text-stroke:0.15px currentColor;">1/5/2013</div>
<div class="t" style="left:173.50px;top:488.70px;font-size:11px;color:#000000;transform:scaleX(0.8420);transform-origin:0 0;-webkit-text-stroke:0.15px currentColor;">123481</div>
<div class="t" style="left:277.75px;top:488.70px;font-size:11px;color:#000000;-webkit-text-stroke:0.15px currentColor;">0</div>
<div class="t" style="left:379.40px;top:488.70px;font-size:11px;color:#000000;-webkit-text-stroke:0.15px currentColor;">Invoiced</div>
<div class="t" style="left:702.55px;top:488.70px;font-size:11px;color:#000000;transform:scaleX(0.8950);transform-origin:0 0;-webkit-text-stroke:0.15px currentColor;">925.94</div>
<div class="t" style="left:753.09px;top:488.70px;font-size:11px;color:#000000;transform:scaleX(0.8950);transform-origin:0 0;-webkit-text-stroke:0.15px currentColor;">-925.94</div>
<div class="t" style="left:797.50px;top:488.70px;font-size:11px;color:#000000;transform:scaleX(0.8360);transform-origin:0 0;-webkit-text-stroke:0.15px currentColor;">USD</div>
<div class="t" style="left:40.00px;top:507.90px;font-size:11px;color:#000000;transform:scaleX(0.9250);transform-origin:0 0;-webkit-text-stroke:0.15px currentColor;">APPM000395</div>
<div class="t" style="left:117.60px;top:507.90px;font-size:11px;color:#000000;transform:scaleX(0.9750);transform-origin:0 0;-webkit-text-stroke:0.15px currentColor;">3/10/2...</div>
<div class="t" style="left:277.75px;top:507.90px;font-size:11px;color:#000000;-webkit-text-stroke:0.15px currentColor;">0</div>
<div class="t" style="left:379.40px;top:507.90px;font-size:11px;color:#000000;-webkit-text-stroke:0.15px currentColor;">Invoiced</div>
<div class="t" style="left:702.78px;top:507.90px;font-size:11px;color:#000000;transform:scaleX(0.8950);transform-origin:0 0;-webkit-text-stroke:0.15px currentColor;">838.82</div>
<div class="t" style="left:767.41px;top:507.90px;font-size:11px;color:#000000;transform:scaleX(0.8950);transform-origin:0 0;-webkit-text-stroke:0.15px currentColor;">0.00</div>
<div class="t" style="left:797.50px;top:507.90px;font-size:11px;color:#000000;transform:scaleX(0.8360);transform-origin:0 0;-webkit-text-stroke:0.15px currentColor;">USD</div>
<div class="a" style="left:0;top:530.4px;width:908px;height:2px;background:#fdfdfd"></div>
<div class="a" style="left:5px;top:50px;width:1px;height:480.4px;background:#7cdaf3"></div>
<div class="a" style="left:619.0px;top:464.5px;width:69.6px;height:25.3px;border:4.1px solid #e2121c"></div>
<div class="a" style="left:684px;top:505.4px;width:62.8px;height:26.6px;border:4.1px solid #e2121c"></div>
</body></html>
